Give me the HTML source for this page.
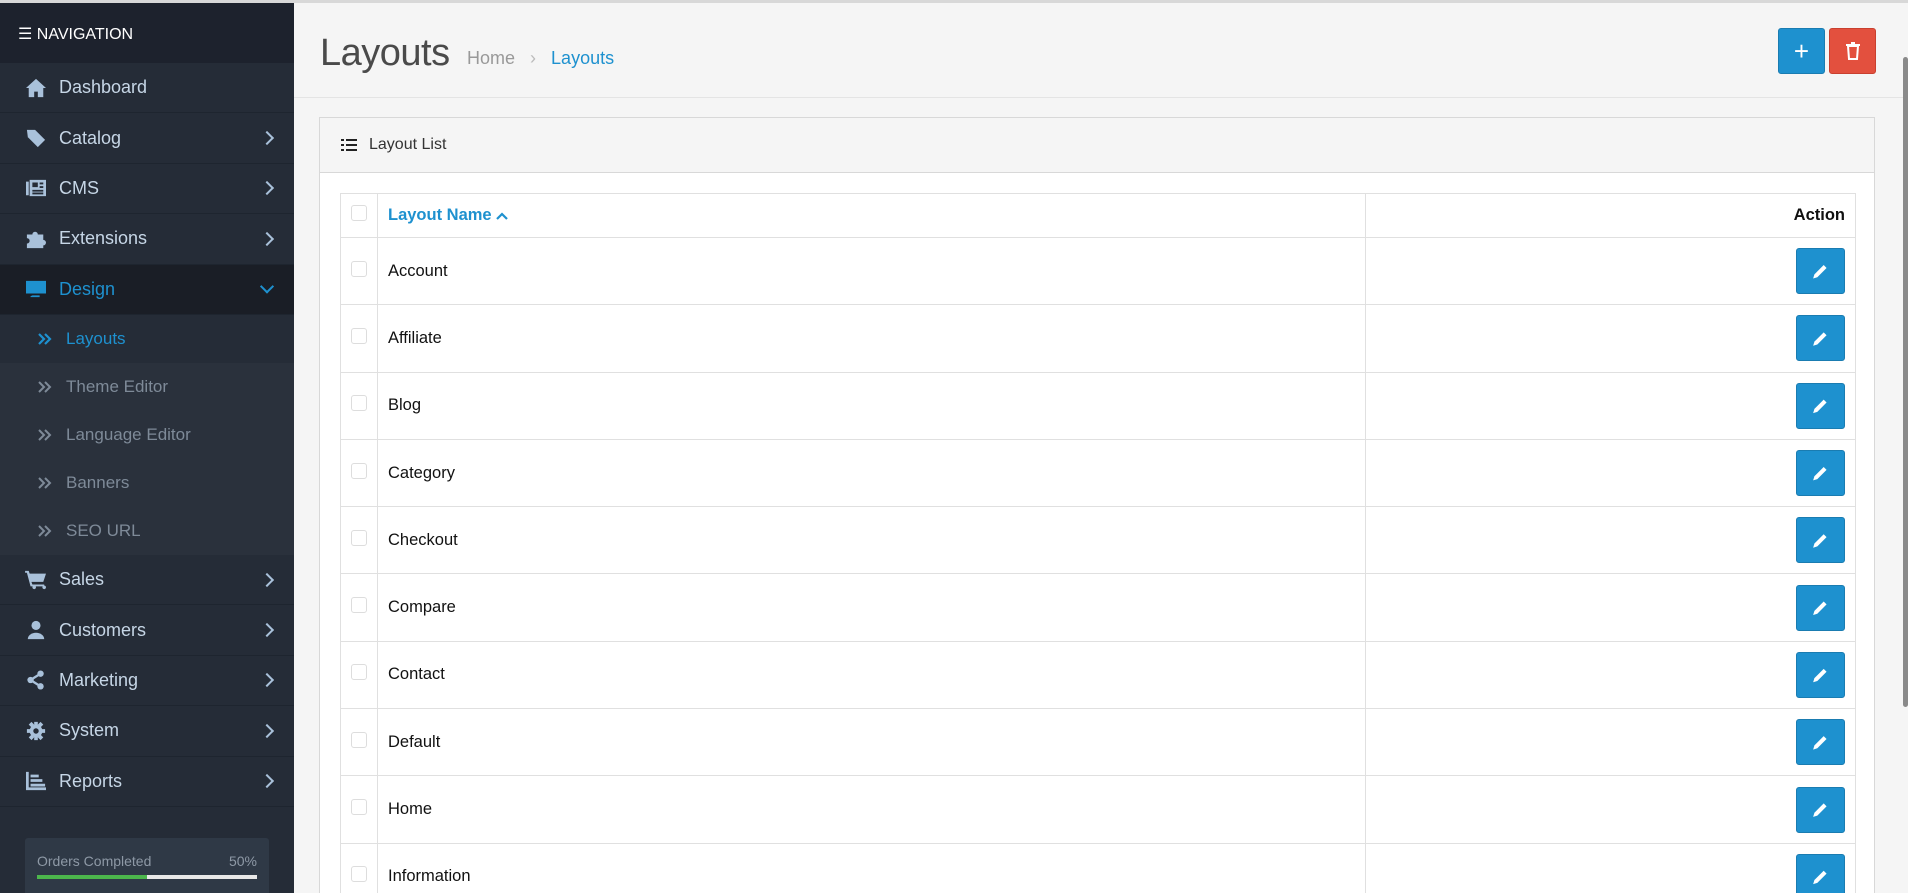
<!DOCTYPE html>
<html><head><meta charset="utf-8"><style>
*{box-sizing:border-box;margin:0;padding:0}
html{width:1908px;height:893px;overflow:hidden}
body{width:1908px;height:893px;overflow:hidden;background:#f5f5f5;font-family:"Liberation Sans",sans-serif;position:relative}
.topline{position:absolute;left:0;top:0;width:1908px;height:3px;background:#d8d8d8;z-index:5}
#side{position:absolute;left:0;top:0;width:294px;height:893px;background:#252c37;overflow:hidden}
.navh{height:63px;background:#1d222d;color:#fff;font-size:16px;padding:24px 0 0 18px}
.mi{height:50.4px;border-bottom:1px solid #1e252f;color:#c6d6e6;font-size:18px;display:flex;align-items:center;padding-left:25px;position:relative}
.mi svg{width:22px;height:20px;margin-right:12px;fill:#a9c1da}
.mi .ch{position:absolute;right:22px;top:50%;width:10px;height:10px;border-right:2.5px solid #a9c1da;border-top:2.5px solid #a9c1da;transform:translateY(-50%) rotate(45deg)}
.mi.act{background:#1a1e26;color:#1e91cf}
.mi.act svg{fill:#1e91cf}
.mi.act .ch{border-color:#1e91cf;transform:translateY(-75%) rotate(135deg)}
.sub{height:48px;color:#7e8a98;font-size:17px;display:flex;align-items:center;padding-left:38px;background:#2a313c}
.sub.a{color:#1e91cf;background:#252c37}
.sub svg{margin-right:14px}
.prog{position:absolute;left:25px;top:838px;width:244px;height:70px;background:#2f3946;border-radius:3px;padding:15px 12px;color:#8e99a6;font-size:14px}
.bar{margin-top:6px;height:4px;background:#e8e8e8;position:relative}
.bar i{position:absolute;left:0;top:0;height:4px;width:50%;background:#4cb64c}
h1{position:absolute;left:320px;top:32px;font-size:38px;font-weight:normal;color:#4a4a4a;letter-spacing:-0.5px}
.bc{position:absolute;left:467px;top:48px;font-size:18px;color:#999}
.bc span{color:#1e91cf}
.hb{position:absolute;left:294px;top:97px;width:1610px;height:1px;background:#e4e4e4}
.btn{position:absolute;width:47px;height:46px;border-radius:3px;color:#fff;display:flex;align-items:center;justify-content:center}
.panel{position:absolute;left:319px;top:117px;width:1556px;height:776px;border:1px solid #d8d8d8;border-bottom:none;background:#fff;overflow:hidden}
.ph{height:55px;background:#f5f5f5;border-bottom:1px solid #d8d8d8;font-size:16px;color:#333;display:flex;align-items:center;padding-left:21px}
table{position:absolute;left:20px;top:75px;width:1516px;border-collapse:collapse;font-size:16.5px;color:#111}
td,th{border:1px solid #e0e0e0;height:67.3px;padding:0 10px}
th{height:44px;text-align:left}
.cb{width:37px;text-align:center;padding:0}
.cb i{display:inline-block;width:16px;height:16px;border:1px solid #ddd;border-radius:3px}
.eb{float:right;width:49px;height:46px;background:#1e91cf;border:1px solid #1a7cb1;border-radius:3px;display:flex;align-items:center;justify-content:center}
.sb{position:absolute;left:1903px;top:57px;width:5px;height:650px;background:#8a8a8a;border-radius:3px}
</style></head><body>
<div class="topline"></div>
<div id="side">
<div class="navh">☰ NAVIGATION</div>
<div class="mi"><svg viewBox="0 0 24 22"><path d="M12 1L1 11h3v10h6v-6h4v6h6V11h3z"/></svg>Dashboard</div>
<div class="mi"><svg viewBox="0 0 24 22"><path d="M2 2h9l11 11-8 8L3 10z"/></svg>Catalog<span class="ch"></span></div>
<div class="mi"><svg viewBox="0 0 24 22"><path d="M1 4h3v15H1zM5 2h18v18H5zm3 3v5h6V5zm8 0v2h4V5zm0 4v2h4V9zM8 13v2h12v-2zm0 3v2h12v-2z" fill-rule="evenodd"/></svg>CMS<span class="ch"></span></div>
<div class="mi"><svg viewBox="0 0 24 22"><path d="M2 6h6a3 3 0 116 0h6v6a3 3 0 010 6v3H2v-5a3 3 0 000-6z"/></svg>Extensions<span class="ch"></span></div>
<div class="mi act"><svg viewBox="0 0 24 22"><path d="M1 2h22v14H1zm7 16h8v2H6v-1z"/></svg>Design<span class="ch"></span></div>
<div class="sub a"><svg width="14" height="12" viewBox="0 0 14 12"><path d="M1 1l5 5-5 5M7 1l5 5-5 5" fill="none" stroke="currentColor" stroke-width="2.2"/></svg>Layouts</div>
<div class="sub"><svg width="14" height="12" viewBox="0 0 14 12"><path d="M1 1l5 5-5 5M7 1l5 5-5 5" fill="none" stroke="currentColor" stroke-width="2"/></svg>Theme Editor</div>
<div class="sub"><svg width="14" height="12" viewBox="0 0 14 12"><path d="M1 1l5 5-5 5M7 1l5 5-5 5" fill="none" stroke="currentColor" stroke-width="2"/></svg>Language Editor</div>
<div class="sub"><svg width="14" height="12" viewBox="0 0 14 12"><path d="M1 1l5 5-5 5M7 1l5 5-5 5" fill="none" stroke="currentColor" stroke-width="2"/></svg>Banners</div>
<div class="sub"><svg width="14" height="12" viewBox="0 0 14 12"><path d="M1 1l5 5-5 5M7 1l5 5-5 5" fill="none" stroke="currentColor" stroke-width="2"/></svg>SEO URL</div>
<div class="mi"><svg viewBox="0 0 24 22"><path d="M0 1h4l1 3h18l-3 9H7l1 3h13v2H6L2 3H0zM8 19a2 2 0 110 .1zm11 0a2 2 0 110 .1z"/></svg>Sales<span class="ch"></span></div>
<div class="mi"><svg viewBox="0 0 24 22"><circle cx="12" cy="6" r="5"/><path d="M3 21a9 7 0 0118 0z"/></svg>Customers<span class="ch"></span></div>
<div class="mi"><svg viewBox="0 0 24 22"><circle cx="17" cy="4" r="3.5"/><circle cx="6" cy="11" r="3.5"/><circle cx="17" cy="18" r="3.5"/><path d="M6 11L17 4M6 11l11 7" stroke="#a9c1da" stroke-width="2.5"/></svg>Marketing<span class="ch"></span></div>
<div class="mi"><svg viewBox="0 0 24 22"><circle cx="12" cy="11" r="7"/><path d="M10 1h4v4h-4zM10 17h4v4h-4zM2 9h4v4H2zM18 9h4v4h-4zM4 4l3-3 3 3-3 3zM14 18l3-3 3 3-3 3zM4 18l3-3 3 3-3 3zM14 4l3-3 3 3-3 3z"/><circle cx="12" cy="11" r="3" fill="#252c37"/></svg>System<span class="ch"></span></div>
<div class="mi"><svg viewBox="0 0 24 22"><path d="M1 1h3v17h19v3H1zm5 3h9v3H6zm0 5h13v3H6zm0 5h16v3H6z"/></svg>Reports<span class="ch"></span></div>
<div class="prog"><div style="display:flex;justify-content:space-between"><span>Orders Completed</span><span>50%</span></div><div class="bar"><i></i></div></div>
</div>
<h1>Layouts</h1>
<div class="bc">Home &nbsp;&nbsp;<span style="color:#bbb">›</span>&nbsp;&nbsp; <span>Layouts</span></div>
<div class="hb"></div>
<div class="btn" style="left:1778px;top:28px;background:#1e91cf;border:1px solid #1a7cb1;font-size:26px">+</div>
<div class="btn" style="left:1829px;top:28px;background:#e3503e;border:1px solid #c9402f"><svg width="16" height="18" viewBox="0 0 16 18"><path d="M1 3h14M6 1h4M3 4h10l-1 13H4z" fill="none" stroke="#fff" stroke-width="2"/></svg></div>
<div class="panel">
<div class="ph"><svg width="16" height="14" viewBox="0 0 16 14" style="margin-right:12px"><path d="M0 1h3v2H0zm5 0h11v2H5zM0 6h3v2H0zm5 0h11v2H5zM0 11h3v2H0zm5 0h11v2H5z" fill="#222"/></svg>Layout List</div>
<table>
<tr><th class="cb"><i></i></th><th style="color:#1e91cf;width:988px">Layout Name <svg width="12" height="8" viewBox="0 0 12 8"><path d="M1 7l5-5 5 5" fill="none" stroke="#1e91cf" stroke-width="2.2"/></svg></th><th style="text-align:right">Action</th></tr>
<tr><td class="cb"><i></i></td><td>Account</td><td><span class="eb"></span></td></tr>
<tr><td class="cb"><i></i></td><td>Affiliate</td><td><span class="eb"></span></td></tr>
<tr><td class="cb"><i></i></td><td>Blog</td><td><span class="eb"></span></td></tr>
<tr><td class="cb"><i></i></td><td>Category</td><td><span class="eb"></span></td></tr>
<tr><td class="cb"><i></i></td><td>Checkout</td><td><span class="eb"></span></td></tr>
<tr><td class="cb"><i></i></td><td>Compare</td><td><span class="eb"></span></td></tr>
<tr><td class="cb"><i></i></td><td>Contact</td><td><span class="eb"></span></td></tr>
<tr><td class="cb"><i></i></td><td>Default</td><td><span class="eb"></span></td></tr>
<tr><td class="cb"><i></i></td><td>Home</td><td><span class="eb"></span></td></tr>
<tr><td class="cb"><i></i></td><td>Information</td><td><span class="eb"></span></td></tr>
</table>
</div>
<div class="sb"></div>
<style>.eb::after{content:"";width:16px;height:16px;background:#fff;clip-path:polygon(12% 70%,70% 12%,88% 30%,30% 88%,4% 96%);display:block}</style>
</body></html>
